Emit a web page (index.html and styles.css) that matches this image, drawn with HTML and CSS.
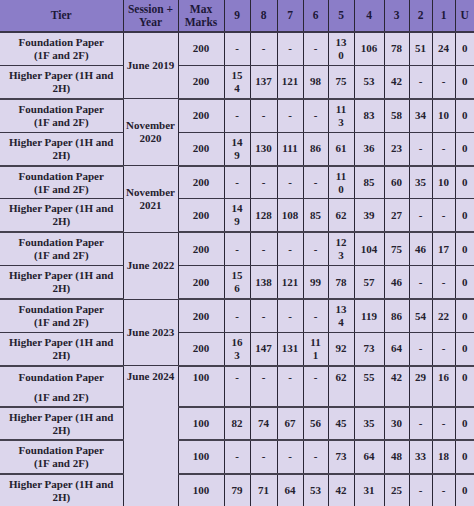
FILE: index.html
```html
<!DOCTYPE html>
<html lang="en">
<head>
<meta charset="utf-8">
<title>Grade boundaries</title>
<link rel="stylesheet" href="styles.css">
</head>
<body>
<table class="grades">
  <colgroup>
    <col class="c-tier"><col class="c-session"><col class="c-max">
    <col class="c-9"><col class="c-8"><col class="c-7"><col class="c-6"><col class="c-5">
    <col class="c-4"><col class="c-3"><col class="c-2"><col class="c-1"><col class="c-u">
  </colgroup>
  <thead>
    <tr>
      <th>Tier</th><th>Session +<br>Year</th><th>Max<br>Marks</th>
      <th>9</th><th>8</th><th>7</th><th>6</th><th>5</th><th>4</th><th>3</th><th>2</th><th>1</th><th>U</th>
    </tr>
  </thead>
  <tbody>
    <tr class="thin">
      <td>Foundation Paper<br>(1F and 2F)</td><td rowspan="2" class="sess">June 2019</td><td>200</td>
      <td>-</td><td>-</td><td>-</td><td>-</td><td>13<br>0</td><td>106</td><td>78</td><td>51</td><td>24</td><td>0</td>
    </tr>
    <tr class="thick">
      <td>Higher Paper (1H and<br>2H)</td><td>200</td>
      <td>15<br>4</td><td>137</td><td>121</td><td>98</td><td>75</td><td>53</td><td>42</td><td>-</td><td>-</td><td>0</td>
    </tr>
    <tr class="thin">
      <td>Foundation Paper<br>(1F and 2F)</td><td rowspan="2" class="sess">November<br>2020</td><td>200</td>
      <td>-</td><td>-</td><td>-</td><td>-</td><td>11<br>3</td><td>83</td><td>58</td><td>34</td><td>10</td><td>0</td>
    </tr>
    <tr class="thick">
      <td>Higher Paper (1H and<br>2H)</td><td>200</td>
      <td>14<br>9</td><td>130</td><td>111</td><td>86</td><td>61</td><td>36</td><td>23</td><td>-</td><td>-</td><td>0</td>
    </tr>
    <tr class="thin">
      <td>Foundation Paper<br>(1F and 2F)</td><td rowspan="2" class="sess">November<br>2021</td><td>200</td>
      <td>-</td><td>-</td><td>-</td><td>-</td><td>11<br>0</td><td>85</td><td>60</td><td>35</td><td>10</td><td>0</td>
    </tr>
    <tr class="thick">
      <td>Higher Paper (1H and<br>2H)</td><td>200</td>
      <td>14<br>9</td><td>128</td><td>108</td><td>85</td><td>62</td><td>39</td><td>27</td><td>-</td><td>-</td><td>0</td>
    </tr>
    <tr class="thin">
      <td>Foundation Paper<br>(1F and 2F)</td><td rowspan="2" class="sess">June 2022</td><td>200</td>
      <td>-</td><td>-</td><td>-</td><td>-</td><td>12<br>3</td><td>104</td><td>75</td><td>46</td><td>17</td><td>0</td>
    </tr>
    <tr class="thick">
      <td>Higher Paper (1H and<br>2H)</td><td>200</td>
      <td>15<br>6</td><td>138</td><td>121</td><td>99</td><td>78</td><td>57</td><td>46</td><td>-</td><td>-</td><td>0</td>
    </tr>
    <tr class="thin">
      <td>Foundation Paper<br>(1F and 2F)</td><td rowspan="2" class="sess">June 2023</td><td>200</td>
      <td>-</td><td>-</td><td>-</td><td>-</td><td>13<br>4</td><td>119</td><td>86</td><td>54</td><td>22</td><td>0</td>
    </tr>
    <tr class="thick">
      <td>Higher Paper (1H and<br>2H)</td><td>200</td>
      <td>16<br>3</td><td>147</td><td>131</td><td>11<br>1</td><td>92</td><td>73</td><td>64</td><td>-</td><td>-</td><td>0</td>
    </tr>
    <tr class="thick tall">
      <td><div class="para">Foundation Paper</div><div class="para">(1F and 2F)</div></td><td rowspan="4" class="sess top">June 2024</td><td>100</td>
      <td>-</td><td>-</td><td>-</td><td>-</td><td>62</td><td>55</td><td>42</td><td>29</td><td>16</td><td>0</td>
    </tr>
    <tr class="thick">
      <td>Higher Paper (1H and<br>2H)</td><td>100</td>
      <td>82</td><td>74</td><td>67</td><td>56</td><td>45</td><td>35</td><td>30</td><td>-</td><td>-</td><td>0</td>
    </tr>
    <tr class="thick">
      <td>Foundation Paper<br>(1F and 2F)</td><td>100</td>
      <td>-</td><td>-</td><td>-</td><td>-</td><td>73</td><td>64</td><td>48</td><td>33</td><td>18</td><td>0</td>
    </tr>
    <tr class="last">
      <td>Higher Paper (1H and<br>2H)</td><td>100</td>
      <td>79</td><td>71</td><td>64</td><td>53</td><td>42</td><td>31</td><td>25</td><td>-</td><td>-</td><td>0</td>
    </tr>
  </tbody>
</table>
</body>
</html>
```

FILE: styles.css
```css
html, body {
  margin: 0;
  padding: 0;
  background: #dcd6ec;
}

.grades {
  width: 474px;
  table-layout: fixed;
  border-collapse: collapse;
  font-family: "Liberation Serif", "Times New Roman", serif;
  font-weight: bold;
  font-size: 11px;
  line-height: 13px;
  color: #24212e;
}

.c-tier { width: 123px; }
.c-session { width: 55px; }
.c-max { width: 46px; }
.c-9 { width: 26px; }
.c-8 { width: 27px; }
.c-7 { width: 26px; }
.c-6 { width: 25px; }
.c-5 { width: 26px; }
.c-4 { width: 30px; }
.c-3 { width: 25px; }
.c-2 { width: 23px; }
.c-1 { width: 23px; }
.c-u { width: 19px; }

.grades th,
.grades td {
  padding: 0 2px;
  text-align: center;
  vertical-align: middle;
  border-left: 1px solid #2a2636;
  border-right: 1px solid #2a2636;
  white-space: nowrap;
}

.grades th:first-child,
.grades td:first-child {
  border-left: none;
}

.grades th:last-child,
.grades td:last-child {
  border-right: none;
}

.grades thead tr {
  height: 32px;
}

.grades th {
  background: #8b7dc8;
  color: #1d1838;
  font-size: 11.5px;
  border-bottom: 2px solid #3a3548;
}

.grades tbody tr {
  height: 33.4px;
}

.grades td {
  background: #dcd6ec;
}

.grades tr.thin td {
  border-bottom: 1px solid #3a3646;
}

.grades tr.thick td {
  border-bottom: 2px solid #45414f;
}

.grades td.sess {
  border-bottom: 2px solid #45414f;
}

.grades tr.tall {
  height: 41px;
}

.grades tr.tall td {
  vertical-align: top;
  padding-top: 4px;
}

.grades td.top {
  vertical-align: top;
  padding-top: 4px;
}

.para + .para {
  margin-top: 7px;
}
```
